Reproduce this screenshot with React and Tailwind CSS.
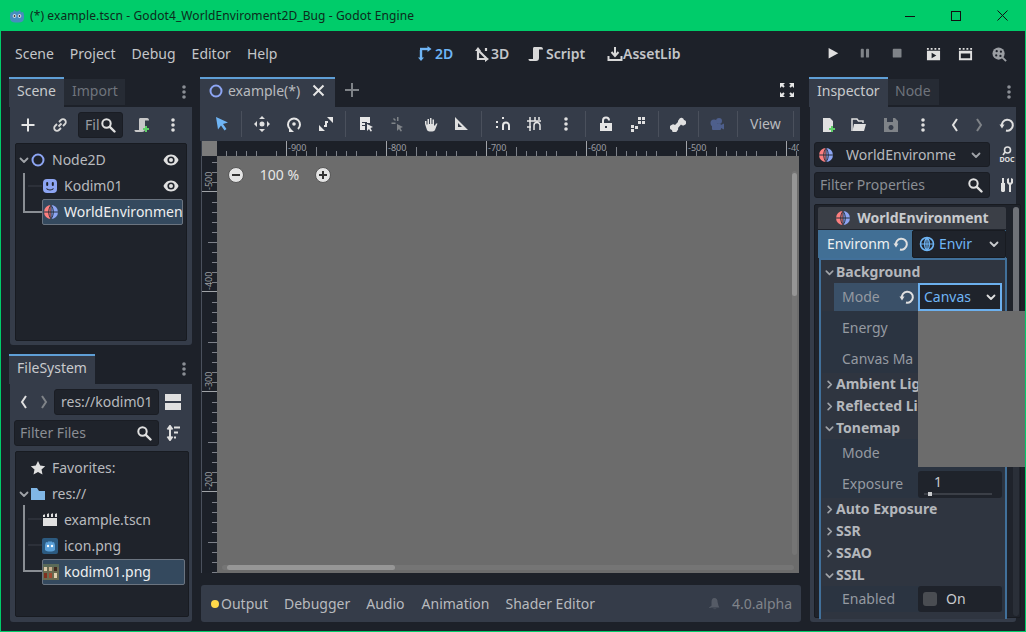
import React from "react";

const Ic = ({ s = 16, w, h, c = "#e0e0e0", vb = "0 0 16 16", children, className = "" }) => (
  <svg width={w || s} height={h || s} viewBox={vb} fill={c} className={"shrink-0 " + className}>{children}</svg>
);
const Dots = ({ c = "#e0e0e0" }) => (
  <Ic c={c}><circle cx="8" cy="3" r="1.8" /><circle cx="8" cy="8" r="1.8" /><circle cx="8" cy="13" r="1.8" /></Ic>
);
const Search = ({ c = "#e0e0e0" }) => (
  <Ic c="none"><circle cx="6.5" cy="6.5" r="4.2" stroke={c} strokeWidth="2" /><path d="M9.8 9.8L14.5 14.5" stroke={c} strokeWidth="2.4" strokeLinecap="round" /></Ic>
);
const Chev = ({ c = "#a0a3a8", s = 12 }) => (
  <Ic s={s} c="none" vb="0 0 12 12"><path d="M2.5 4.5L6 8l3.5-3.5" stroke={c} strokeWidth="1.8" strokeLinecap="round" strokeLinejoin="round" /></Ic>
);
const ChevR = ({ c = "#a0a3a8", s = 12 }) => (
  <Ic s={s} c="none" vb="0 0 12 12"><path d="M4.5 2.5L8 6l-3.5 3.5" stroke={c} strokeWidth="1.8" strokeLinecap="round" strokeLinejoin="round" /></Ic>
);
const Eye = () => (
  <Ic><path d="M8 2.5C4 2.5 1.5 5.5.5 8c1 2.5 3.5 5.5 7.5 5.5s6.500-3 7.500-5.500C14.500 5.500 12 2.500 8 2.500z" /><circle cx="8" cy="8" r="3.600" fill="#1f232b" /><circle cx="8" cy="8" r="2" /></Ic>
);
const Ring = () => (
  <Ic c="none"><circle cx="8" cy="8" r="5.500" stroke="#8da5f3" strokeWidth="2" /></Ic>
);
const Kodim = () => (
  <Ic><rect x="1" y="1" width="14" height="14" rx="4" fill="#8da5f3" /><rect x="4.200" y="4" width="2" height="4" rx="1" fill="#1f232b" /><rect x="9.800" y="4" width="2" height="4" rx="1" fill="#1f232b" /><path d="M4.500 10.500c1.500 2 5.500 2 7 0" stroke="#1f232b" strokeWidth="1.200" fill="none" /></Ic>
);
const WorldIc = () => (
  <Ic c="none">
    <path d="M8 1a7 7 0 0 0 0 14z" fill="#fc7f7f" />
    <path d="M8 1a7 7 0 0 1 0 14z" fill="#8da5f3" />
    <path d="M1 8h14M8 1v14M8 1.500C5 4 5 12 8 14.500M8 1.500c3 2.500 3 10.500 0 13" stroke="#26303c" strokeWidth="1" />
  </Ic>
);
const Globe = () => (
  <Ic c="none"><circle cx="8" cy="8" r="6.500" stroke="#6fb5f5" strokeWidth="1.600" /><path d="M1.500 8h13M8 1.500v13M8 1.500C4.800 4 4.800 12 8 14.500M8 1.500c3.200 2.500 3.200 10.500 0 13" stroke="#6fb5f5" strokeWidth="1.200" /></Ic>
);
const Revert = ({ c = "#e0e0e0" }) => (
  <Ic c="none"><path d="M3 9.500A5.500 5.500 0 1 1 7 13.500" stroke={c} strokeWidth="2" /><path d="M.5 7.500h5l-2.500 4z" fill={c} /></Ic>
);
const ScriptIc = ({ plus }) => (
  <Ic>
    <path d="M6 1h7c1.500 0 2 1 2 2.500H11V12a3 3 0 0 1-3 3H2c-1 0-1.500-1-1.500-2H5V3c0-1 .3-2 1-2z" fill={plus ? "#c8c8c8" : "#d8d8d8"} />
    {plus && <path d="M11 9h2v2h2v2h-2v2h-2v-2H9v-2h2z" fill="#5fd068" />}
  </Ic>
);
const TabBar = ({ children }) => <div className="h-[30px] flex items-end">{children}</div>;
const ActiveTab = ({ className, children }) => (
  <div className={"h-[30px] bg-[#353c49] border-t-2 border-[#5f9fd6] flex items-center pb-[4px] text-[#c8cacd] " + className}>{children}</div>
);
const Input = ({ className, children }) => (
  <div className={"bg-[#1f232b] rounded-[3px] border border-[#1a1d24] flex items-center " + className}>{children}</div>
);
const Sep = () => <div className="w-px h-[26px] bg-[#4a505c]" />;

const Row = ({ children, selected }) => (
  <div className={"h-[26px] flex items-center " + (selected ? "bg-[#34495e] border border-[#6b7480] rounded-[2px] ml-[26px] mr-[3px]" : "")}>{children}</div>
);

const Lines = ({ children }) => <svg className="absolute left-0 top-0" width="60" height="170" fill="none">{children}</svg>;

function HRuler() {
  const ticks = [];
  for (let i = 0; i < 60; i++) {
    const x = 9 + i * 10;
    const mod = (i + 6) % 10;
    if (mod === 0) continue;
    const y = mod === 5 ? 6 : 10;
    ticks.push(<path key={i} d={`M${x + 0.5} ${y}V15`} stroke="#7c8088" />);
  }
  const labels = ["-900", "-800", "-700", "-600", "-500", "-40"];
  return (
    <svg width="583" height="15" className="block">
      {ticks}
      {labels.map((l, i) => (
        <g key={l}>
          <path d={`M${69.5 + i * 100} 0V15`} stroke="#a0a3a8" />
          <text x={71 + i * 100} y="9.500" fontSize="9" fill="#9a9da2" fontFamily="Noto Sans">{l}</text>
        </g>
      ))}
    </svg>
  );
}
function VRuler() {
  const ticks = [];
  for (let i = 0; i < 42; i++) {
    const y = 6 + i * 10;
    const mod = (i + 7) % 10;
    if (mod === 0) continue;
    const x = mod === 5 ? 6 : 10;
    ticks.push(<path key={i} d={`M${x} ${y + 0.5}H15`} stroke="#7c8088" />);
  }
  return (
    <svg width="15" height="417" className="block">
      {ticks}
      {[-500, -400, -300, -200].map((l, i) => (
        <g key={l}>
          <path d={`M0 ${35.5 + i * 100}H15`} stroke="#a0a3a8" />
          <text transform={`translate(9.500 ${34 + i * 100}) rotate(-90)`} fontSize="9" fill="#9a9da2" fontFamily="Noto Sans">{l}</text>
        </g>
      ))}
    </svg>
  );
}

const Section = ({ open, children }) => (
  <div className="h-[22px] flex items-center font-bold text-[#b4b7bc] pl-[2px] bg-[#2f3540]">
    {open ? <Chev s={11} /> : <ChevR s={11} />}
    <span className="ml-[1px] whitespace-nowrap">{children}</span>
  </div>
);
const Prop = ({ className, children, right }) => (
  <div className={"flex items-center bg-[#2b3441] " + className}>
    <span className="pl-[20px] w-[96px] text-[#959aa1] whitespace-nowrap overflow-hidden">{children}</span>
    {right}
  </div>
);

export default function App() {
  return (
    <div className="relative w-[1026px] h-[632px] overflow-hidden bg-[#1d2129] border-x border-b border-[#00cc6a] text-[14px] leading-[20px] text-[#c8cacd] font-['Noto_Sans',sans-serif]">
      {/* Title bar */}
      <div className="h-[31px] bg-[#00cc6a] flex items-center text-[#0d2a1c] text-[12px] tracking-[0.1px] pl-[8px]">
        <Ic s={16} c="#478cbf">
          <path d="M1 8c0-2 .5-3 1-4l2 .5L5 2l2 1.500h2L11 2l1 2.500L14 4c.5 1 1 2 1 4 0 1 0 4-1 5-2 2-10 2-12 0-1-1-1-4-1-5z" />
          <circle cx="5.500" cy="8" r="1.800" fill="#fff" /><circle cx="10.500" cy="8" r="1.800" fill="#fff" />
          <circle cx="5.500" cy="8" r="1" fill="#333" /><circle cx="10.500" cy="8" r="1" fill="#333" />
        </Ic>
        <span className="ml-[5px] whitespace-nowrap">(*) example.tscn - Godot4_WorldEnviroment2D_Bug - Godot Engine</span>
        <div className="ml-auto flex items-center">
          <div className="w-[46px] flex justify-center"><svg width="10" height="10" fill="none"><path d="M0 5.500H10" stroke="#111" /></svg></div>
          <div className="w-[46px] flex justify-center"><svg width="10" height="10" fill="none"><rect x=".5" y=".5" width="9" height="9" stroke="#111" /></svg></div>
          <div className="w-[46px] flex justify-center"><svg width="11" height="11" fill="none"><path d="M.5.5l10 10M10.500.5l-10 10" stroke="#111" /></svg></div>
        </div>
      </div>

      {/* Menu bar */}
      <div className="h-[46px] flex items-center relative">
        <div className="w-[416px] pl-[14px] flex gap-[16px] text-[#c4c6c9]">
          <span>Scene</span><span>Project</span><span>Debug</span><span>Editor</span><span>Help</span>
        </div>
        <div className="flex items-center font-semibold text-[#c4c6c9]">
          <Ic c="none"><path d="M4 4v8" stroke="#6fb5f5" strokeWidth="2.400" /><path d="M1 11.500h6L4 15z" fill="#6fb5f5" /><path d="M3 3h8" stroke="#6fb5f5" strokeWidth="2.400" /><path d="M10.500 0v6L14.500 3z" fill="#6fb5f5" /></Ic>
          <span className="text-[#6fb5f5] w-[41px] pl-[2px]">2D</span>
          <Ic c="none" className="mr-[1px]"><path d="M4 4v9h8M4 4l8 8M12 2v3" stroke="#d8d8d8" strokeWidth="2.200" /><path d="M1 5l3-4 3 4zM11 10l4 3-4 3z" fill="#d8d8d8" /></Ic>
          <span className="w-[37px]">3D</span>
          <ScriptIc />
          <span className="ml-[2px] w-[61px]">Script</span>
          <Ic c="none"><path d="M8 1v8M4.500 6L8 10l3.500-4M1.500 10v4h13v-4" stroke="#d8d8d8" strokeWidth="2" /></Ic>
          <span>AssetLib</span>
        </div>
        <div className="ml-auto flex items-center mr-[18px]">
          <Ic s={14} className="mr-[19px]"><path d="M3 1l11 6-11 6z" /></Ic>
          <Ic s={14} c="#7f8388" className="mr-[18px]"><rect x="2" y="2" width="3.500" height="10" rx="1" /><rect x="8" y="2" width="3.500" height="10" rx="1" /></Ic>
          <Ic s={14} c="#7f8388" className="mr-[21px]"><rect x="2" y="2" width="10" height="10" rx="1" /></Ic>
          <Ic s={15} className="mr-[17px]"><path d="M1 1h2v2H1zM5 1h2v2H5zM9 1h2v2H9zM13 1h2v2h-2zM1 4h14v10H1z" /><path d="M6 6l5 3-5 3z" fill="#1d2129" /></Ic>
          <Ic s={15} className="mr-[19px]"><path d="M1 1h2v2H1zM5 1h2v2H5zM9 1h2v2H9zM13 1h2v2h-2z" /><path d="M1 4h14v10H1zM3 7v5h10V7z" fillRule="evenodd" /></Ic>
          <Ic s={15} c="#9a9da2"><circle cx="7" cy="7" r="6.500" /><circle cx="5" cy="4.500" r="1.200" fill="#1d2129" /><circle cx="9.500" cy="5" r="1.200" fill="#1d2129" /><circle cx="4.500" cy="9" r="1.200" fill="#1d2129" /><circle cx="9" cy="9.500" r="1.200" fill="#1d2129" /><path d="M11 11l4 4" stroke="#9a9da2" strokeWidth="2" /></Ic>
        </div>
      </div>

      {/* Docks */}
      <div className="flex pl-[8px] h-[545px]">
        {/* Left column */}
        <div className="w-[183px] flex flex-col">
          <TabBar>
            <ActiveTab className="w-[55px] pl-[8px]">Scene</ActiveTab>
            <div className="h-[26px] mb-[2px] w-[61px] bg-[#262b34] flex items-center pl-[8px] pb-[2px] text-[#6f747c]">Import</div>
            <div className="ml-auto mr-[0px] mb-[7px]"><Dots c="#8a8e94" /></div>
          </TabBar>
          <div className="ml-[1px] h-[238px] bg-[#353c49] rounded-b-[3px] pt-[5px] px-[5px] pb-[4px] flex flex-col">
            <div className="h-[26px] flex items-center">
              <Ic c="none" className="ml-[5px]"><path d="M8 1.500v13M1.500 8h13" stroke="#e6e6e6" strokeWidth="2" /></Ic>
              <Ic c="none" className="ml-[16px]"><path d="M6.500 9.500l3-3M5 7L3 9a2.800 2.800 0 0 0 4 4l2-2M7 5l2-2a2.800 2.800 0 0 1 4 4l-2 2" stroke="#d8d8d8" strokeWidth="1.800" /></Ic>
              <Input className="ml-[10px] w-[45px] h-[26px] pl-[6px] text-[#9a9da2]"><span>Fil</span><Search /></Input>
              <span className="ml-[11px]"><ScriptIc plus /></span>
              <span className="ml-[15px]"><Dots /></span>
            </div>
            <div className="relative mt-[5px] flex-1 bg-[#1f232b] border border-[#181b21] rounded-[2px] pt-[3px]">
              <Lines>
                <path d="M12 42H26" stroke="#3a3f49" />
                <path d="M8 29V68H26" stroke="#8a8e94" strokeWidth="2" />
              </Lines>
              <Row>
                <span className="ml-[2px] w-[10px]"><Chev /></span>
                <span className="ml-[2px]"><Ring /></span>
                <span className="ml-[6px] text-[#b8babe]">Node2D</span>
                <span className="ml-auto mr-[7px]"><Eye /></span>
              </Row>
              <Row>
                <span className="ml-[26px]"><Kodim /></span>
                <span className="ml-[6px] text-[#b8babe]">Kodim01</span>
                <span className="ml-auto mr-[7px]"><Eye /></span>
              </Row>
              <Row selected>
                <WorldIc />
                <span className="ml-[5px] text-[#eeeff0] whitespace-nowrap">WorldEnvironmen</span>
              </Row>
            </div>
          </div>

          <div className="mt-[9px]">
            <TabBar>
              <ActiveTab className="w-[86px] pl-[8px]">FileSystem</ActiveTab>
              <div className="ml-auto mb-[7px]"><Dots c="#8a8e94" /></div>
            </TabBar>
          </div>
          <div className="ml-[1px] h-[238px] bg-[#353c49] rounded-b-[3px] pt-[5px] px-[4px] pb-[5px] flex flex-col">
            <div className="h-[26px] flex items-center">
              <Ic c="none" className="ml-[2px]"><path d="M10 2L6 8l4 6" stroke="#e0e0e0" strokeWidth="2" /></Ic>
              <Ic c="none" className="ml-[4px]"><path d="M6 2l4 6-4 6" stroke="#7f8388" strokeWidth="2" /></Ic>
              <Input className="ml-[2px] w-[105px] h-[26px] pl-[6px] text-[#b8babe] whitespace-nowrap overflow-hidden">res://kodim01</Input>
              <svg width="16" height="16" className="ml-[6px]" fill="#e0e0e0"><rect width="16" height="7" /><rect y="9" width="16" height="7" /></svg>
            </div>
            <div className="h-[26px] mt-[5px] flex items-center">
              <Input className="w-[145px] h-[26px] pl-[5px] pr-[6px] text-[#8a8e94] justify-between">Filter Files<Search /></Input>
              <span className="ml-[6px]"><Ic c="none"><path d="M5 2v12M2.500 4.500L5 1l2.500 3.500M2.500 11.500L5 15l2.500-3.500" stroke="#e0e0e0" strokeWidth="2" /><path d="M9 2.500h6M9 7.500h4M9 12.500h2" stroke="#e0e0e0" strokeWidth="2" /></Ic></span>
            </div>
            <div className="relative mt-[5px] ml-[1px] mr-[-1px] flex-1 bg-[#1f232b] border border-[#181b21] rounded-[2px] pt-[3px]">
              <Lines>
                <path d="M8 53V119H26" stroke="#8a8e94" strokeWidth="2" />
                <path d="M12 67H26M12 93H26" stroke="#3a3f49" />
              </Lines>
              <Row>
                <span className="ml-[14px]"><Ic><path d="M8 1l2.200 4.600 5 .6-3.700 3.400 1 5L8 12.100 3.500 14.600l1-5L.8 6.200l5-.6z" /></Ic></span>
                <span className="ml-[6px] text-[#b8babe]">Favorites:</span>
              </Row>
              <Row>
                <span className="ml-[2px] w-[10px]"><Chev /></span>
                <span className="ml-[2px]"><Ic c="#80b6e6"><path d="M1 2h6l2 3h6v9H1z" /></Ic></span>
                <span className="ml-[6px] text-[#b8babe]">res://</span>
              </Row>
              <Row>
                <span className="ml-[26px]"><Ic><path d="M1 6h14v8H1zM1 3l2-.8v2.800H1zM5 2l2-.8v3.800H5zM9 2l2-.800v3.800H9zM13 2l2-.800v3.800h-2z" /></Ic></span>
                <span className="ml-[6px] text-[#b8babe]">example.tscn</span>
              </Row>
              <Row>
                <span className="ml-[26px]">
                  <Ic><rect width="16" height="16" rx="2" fill="#2c5a80" /><path d="M3 7l1-3 1.500.5L6 3.500h4l.5 1L12 4l1 3v5c-2 2-8 2-10 0z" fill="#5aa0d8" /><circle cx="6" cy="8" r="1.200" fill="#fff" /><circle cx="10" cy="8" r="1.200" fill="#fff" /></Ic>
                </span>
                <span className="ml-[6px] text-[#b8babe]">icon.png</span>
              </Row>
              <Row selected>
                <Ic><rect width="16" height="16" fill="#6a6a50" /><rect y="0" width="16" height="3" fill="#5a6a58" /><rect x="1" y="3" width="3" height="4" fill="#d8c8a8" /><rect x="6" y="3" width="3" height="4" fill="#c8b090" /><rect x="11" y="3" width="3" height="4" fill="#402820" /><rect x="1" y="9" width="3" height="5" fill="#803020" /><rect x="6" y="9" width="3" height="5" fill="#a04830" /><rect x="11" y="9" width="3" height="5" fill="#e0d0b0" /></Ic>
                <span className="ml-[5px] text-[#eeeff0]">kodim01.png</span>
              </Row>
            </div>
          </div>
        </div>

        {/* Center */}
        <div className="ml-[8px] w-[600px] flex flex-col">
          <div className="h-[30px] flex">
            <ActiveTab className="w-[135px] pl-[8px]">
              <Ring /><span className="ml-[4px] text-[#b8babe]">example(*)</span>
              <Ic c="none" className="ml-[11px]"><path d="M2.500 2.500l10 10M12.500 2.500l-10 10" stroke="#e6e6e6" strokeWidth="2" /></Ic>
            </ActiveTab>
            <Ic c="none" className="ml-[9px] mt-[5px]"><path d="M8 1v14M1 8h14" stroke="#7f8388" strokeWidth="2" /></Ic>
            <Ic className="ml-auto mt-[5px] mr-[5px]" c="none"><path d="M1 1h5L1 6zM15 1v5l-5-5zM15 15h-5l5-5zM1 15v-5l5 5z" fill="#e6e6e6" /><path d="M2 2l3 3M14 2l-3 3M14 14l-3-3M2 14l3-3" stroke="#e6e6e6" strokeWidth="2" /></Ic>
          </div>
          <div className="h-[34px] bg-[#353c49] flex items-center relative">
            <Ic c="#6fb5f5" className="ml-[14px]"><path d="M2 1l12 5.500-5 1.500 3.500 5-2 1.500-3.500-5-3 4z" /></Ic>
            <span className="ml-[11px]"><Sep /></span>
            <Ic className="ml-[12px]"><path d="M8 0l3 3H5zM8 16l-3-3h6zM0 8l3-3v6zM16 8l-3 3V5z" /><circle cx="8" cy="8" r="2.500" /></Ic>
            <Ic c="none" className="ml-[16px]"><path d="M4 13a6 6 0 1 1 8 0" stroke="#e6e6e6" strokeWidth="2" /><circle cx="8" cy="8" r="1.800" fill="#e6e6e6" /><path d="M8 16H3v-5z" fill="#e6e6e6" /></Ic>
            <Ic c="none" className="ml-[16px]"><path d="M9 1h6v6zM7 15H1V9z" fill="#e6e6e6" /><path d="M10 6h-2v2M6 10h2V8" stroke="#e6e6e6" strokeWidth="2" /></Ic>
            <span className="ml-[11px]"><Sep /></span>
            <Ic c="none" className="ml-[12px]"><path d="M2 1h10v6H9v-1H4v1h3v2H4v1h3v4H2z" fill="#e6e6e6" /><path d="M9 8l6 3-2.500 1 1.500 3-1.500.5L11 13l-2 2z" fill="#e6e6e6" /></Ic>
            <Ic className="ml-[16px]" c="#7f8388"><path d="M7 8l6 3-2.500 1 1.500 3-1.500.5L9 13l-2 2zM7 1h1.500v4H7zM1.500 6.500h4V8h-4zM3 3l1-1 2 2-1 1z" /></Ic>
            <Ic className="ml-[16px]"><path d="M3 8V5h1.500v3.500H5.500V3H7v5h1V2h1.500v6h1V3.500H12v6h1l1-2h1.500L13 14c-1 2-7 2-8 0z" /></Ic>
            <Ic className="ml-[15px]"><path d="M2 1l13 13H2zM5 7v4h4z" fillRule="evenodd" /></Ic>
            <span className="ml-[12px]"><Sep /></span>
            <Ic c="none" className="ml-[13px]"><path d="M8 14V9.500a3 3 0 0 1 6 0V14" stroke="#e6e6e6" strokeWidth="2" /><path d="M1 5h2v2H1zM7 1h2v2H7zM1 10h2v2H1z" fill="#e6e6e6" /></Ic>
            <Ic c="none" className="ml-[15px]"><path d="M8 14V9.500a3 3 0 0 1 6 0V14M1 5h14M1 11h4M4 1v14M9 1v4M13 1v3" stroke="#e6e6e6" strokeWidth="1.500" /></Ic>
            <span className="ml-[16px]"><Dots /></span>
            <span className="ml-[11px]"><Sep /></span>
            <Ic className="ml-[12px]" c="none"><rect x="2" y="7" width="12" height="8" fill="#e6e6e6" /><path d="M5 7V4.500a3 3 0 0 1 6 0" stroke="#e6e6e6" strokeWidth="2" /><rect x="7" y="10" width="2" height="2" fill="#353c49" /></Ic>
            <Ic className="ml-[16px]"><path d="M1 9h3v3H1zM1 13h3v3H1zM5 13h3v-3H5zM8 5h3v3H8zM12 5h3v3h-3zM12 1h3v3h-3zM8 1h3v3H8z" /></Ic>
            <span className="ml-[12px]"><Sep /></span>
            <Ic className="ml-[11px]" c="#e0e0e0"><path d="M9 3.500a2.600 2.600 0 0 1 5 .5 2.600 2.600 0 0 1 .5 5 2.600 2.600 0 0 1-3.500-.5L8 12a2.600 2.600 0 0 1-1 3 2.600 2.600 0 0 1-5-1 2.600 2.600 0 0 1-.5-5A2.600 2.600 0 0 1 5 9l3-3a2.600 2.600 0 0 1 1-2.500z" /></Ic>
            <span className="ml-[12px]"><Sep /></span>
            <Ic className="ml-[10px]" c="#4e5f8c"><circle cx="5" cy="7" r="3.500" /><circle cx="10" cy="5" r="3" /><rect x="3" y="8" width="9" height="6" rx="1" /><path d="M12 9l3-1.500v6L12 12z" /></Ic>
            <span className="ml-[12px]"><Sep /></span>
            <span className="ml-[12px] text-[#b8babe]">View</span>
            <span className="ml-[12px]"><Sep /></span>
          </div>

          {/* Viewport */}
          <div className="relative h-[432px] ml-[1px] mr-[1px] flex flex-col">
            <div className="flex h-[15px] bg-[#1c2028]">
              <div className="w-[16px] bg-[#7b7b7b] border-l border-[#353c49]" />
              <HRuler />
            </div>
            <div className="flex flex-1 min-h-0">
              <div className="w-[16px] bg-[#1c2028] border-l border-[#4a505c] overflow-hidden"><VRuler /></div>
              <div className="flex-1 bg-[#6c6c6c] relative">
                <div className="absolute left-[11px] top-[9px] flex items-center text-[#e6e6e6]">
                  <svg width="16" height="16" fill="none"><circle cx="8" cy="8" r="7.500" fill="#e4e4e4" stroke="#555" /><path d="M4 8h8" stroke="#333" strokeWidth="2" /></svg>
                  <span className="w-[71px] text-center">100 %</span>
                  <svg width="16" height="16" fill="none"><circle cx="8" cy="8" r="7.500" fill="#e4e4e4" stroke="#555" /><path d="M4 8h8M8 4v8" stroke="#333" strokeWidth="2" /></svg>
                </div>
                <div className="absolute right-[2px] top-[15px] bottom-[18px] w-[5px] rounded-full bg-[#757575]">
                  <div className="h-[123px] w-[5px] rounded-full bg-[#969696] mt-[2px]" />
                </div>
                <div className="absolute left-[5px] right-[5px] bottom-[3px] h-[5px] rounded-full bg-[#757575]">
                  <div className="ml-[5px] h-[5px] w-[168px] rounded-full bg-[#969696]" />
                </div>
              </div>
            </div>
          </div>

          {/* Bottom panel */}
          <div className="mt-[12px] h-[37px] ml-[1px] mr-[-1px] bg-[#353c49] rounded-[3px] flex items-center pl-[10px] relative text-[#b8babe]">
            <span className="w-[8px] h-[8px] rounded-full bg-[#ffd94a]" />
            <span className="ml-[2px]">Output</span>
            <span className="ml-[16px]">Debugger</span>
            <span className="ml-[16px]">Audio</span>
            <span className="ml-[17px]">Animation</span>
            <span className="ml-[16px]">Shader Editor</span>
            <Ic s={14} c="#555b66" className="ml-auto"><path d="M7 1c3 0 4 2 4 5l1 4 1 2H4c-1 0-2 1-3 0l3-2 0-4c0-3 1-5 3-5zM5 13h5l-2 1z" /></Ic>
            <span className="ml-[10px] mr-[9px] text-[#80848b]">4.0.alpha</span>
          </div>
        </div>

        {/* Inspector */}
        <div className="ml-[9px] w-[207px] flex flex-col relative">
          <TabBar>
            <ActiveTab className="w-[79px] pl-[8px]">Inspector</ActiveTab>
            <div className="h-[26px] mb-[2px] w-[51px] bg-[#262b34] flex items-center pl-[7px] pb-[2px] text-[#6f747c]">Node</div>
            <div className="ml-auto mr-[-1px] mb-[7px]"><Dots c="#8a8e94" /></div>
          </TabBar>
          <div className="ml-[1px] h-[515px] bg-[#353c49] pt-[5px] pl-[4px] rounded-b-[3px]">
            <div className="h-[26px] flex items-center">
              <Ic className="ml-[6px]"><path d="M3 1h7l3 3v5h-2v2H9v2h2v2H3z" /><path d="M11 9h2v2h2v2h-2v2h-2v-2H9v-2h2z" fill="#5fd068" /></Ic>
              <Ic className="ml-[15px]" c="none"><path d="M1 14V2h5l1.500 2H12v2" stroke="#e0e0e0" strokeWidth="1.500" /><path d="M3 7h12l-2 7H1.500z" fill="#e0e0e0" /></Ic>
              <Ic className="ml-[16px]" c="#7f8388"><path d="M1 1h11l3 3v11H1zM4 1h6v4H4zM8 8a2.500 2.500 0 1 0 .01 0z" fillRule="evenodd" /></Ic>
              <span className="ml-[16px]"><Dots /></span>
              <Ic className="ml-[16px]" c="none"><path d="M10 2L6 8l4 6" stroke="#e0e0e0" strokeWidth="2" /></Ic>
              <Ic className="ml-[8px]" c="none"><path d="M6 2l4 6-4 6" stroke="#7f8388" strokeWidth="2" /></Ic>
              <span className="ml-[12px]"><Revert /></span>
            </div>
            <div className="h-[25px] mt-[4px] flex items-center">
              <Input className="w-[176px] h-[25px] pl-[3px] text-[#b8babe]">
                <WorldIc /><span className="ml-[12px]">WorldEnvironme</span><span className="ml-auto mr-[7px]"><Chev /></span>
              </Input>
              <div className="ml-[9px] w-[16px] flex flex-col items-center leading-none">
                <Ic s={10} c="none" vb="0 0 10 10"><circle cx="5.500" cy="4" r="3" stroke="#e0e0e0" strokeWidth="1.600" /><path d="M3 6L1 9" stroke="#e0e0e0" strokeWidth="1.600" /></Ic>
                <span className="text-[7px] font-bold text-[#e0e0e0] leading-[7px]">DOC</span>
              </div>
            </div>
            <div className="h-[26px] mt-[5px] flex items-center">
              <Input className="w-[176px] h-[26px] pl-[5px] pr-[6px] justify-between text-[#8a8e94]">Filter Properties<Search /></Input>
              <Ic className="ml-[9px]"><path d="M3 1h2v5h1v8l-1 1H3l-1-1V6h1zM10 1v4l1 1 1-1V1l2 1v4l-2 2v7h-2V8L8 6V2z" /></Ic>
            </div>
            <div className="mt-[6px] w-[207px] h-[414px] bg-[#1f232b] border border-[#181b21] rounded-[2px] relative pl-[3px] pt-[2px]">
              <div className="absolute left-[198px] top-[2px] bottom-[1px] w-[6px] rounded-full bg-[#2a2f38]">
                <div className="w-[6px] h-[140px] rounded-full bg-[#6f7278]" />
              </div>
              <div className="w-[188px] h-[22px] bg-[#3b3f47] rounded-t-[2px] flex items-center justify-center font-bold text-[#c8cacd]">
                <WorldIc /><span className="ml-[6px]">WorldEnvironment</span>
              </div>
              <div className="w-[188px] h-[28px] flex bg-[#416f95] mt-[1px]">
                <div className="w-[94px] flex items-center pl-[9px] pb-[1px] text-[#eeeff0]">
                  <span>Environm</span><span className="ml-auto mr-[3px]"><Revert /></span>
                </div>
                <div className="flex-1 bg-[#1f232b] border border-[#181b21] rounded-[2px] flex items-center pb-[1px] pl-[6px] text-[#6fb5f5]">
                  <Globe /><span className="ml-[4px]">Envir</span><span className="ml-auto mr-[5px]"><Chev c="#c8cacd" /></span>
                </div>
              </div>
              <div className="w-[188px] h-[361px] ml-[1px] border-x-2 border-t-2 border-b-0 border-[#41709a] bg-[#2f3540] pl-[1px] pr-[1px] pt-[1px]">
                <Section open>Background</Section>
                <div className="h-[28px] flex bg-[#2f3540]">
                  <div className="ml-[12px] w-[84px] bg-[#3a5068] flex items-center pl-[8px] text-[#959aa1]">
                    Mode<span className="ml-auto mr-[3px]"><Revert /></span>
                  </div>
                  <div className="w-[84px] border-2 border-[#6cb0ee] bg-[#1f232b] flex items-center pl-[4px] text-[#6fb5f5]">
                    Canvas<span className="ml-auto mr-[3px]"><Chev c="#e0e0e0" /></span>
                  </div>
                </div>
                <Prop className="h-[33px]">Energy</Prop>
                <Prop className="h-[29px]">Canvas Ma</Prop>
                <Section>Ambient Light</Section>
                <Section>Reflected Light</Section>
                <Section open>Tonemap</Section>
                <Prop className="h-[29px] pb-[2px]">Mode</Prop>
                <Prop className="h-[30px] pt-[2px]" right={
                  <div className="w-[84px] h-[27px] bg-[#1f232b] rounded-[3px] relative pl-[16px] pt-[1px] text-[#c8cacd]">
                    1
                    <div className="absolute left-[6px] right-[10px] bottom-[3px] h-[2px] bg-[#3b3f47]" />
                    <div className="absolute left-[10px] bottom-[2px] w-[4px] h-[4px] bg-[#c8cacd]" />
                  </div>
                }>Exposure</Prop>
                <Section>Auto Exposure</Section>
                <Section>SSR</Section>
                <Section>SSAO</Section>
                <Section open>SSIL</Section>
                <Prop className="h-[26px]" right={
                  <div className="w-[84px] h-[26px] bg-[#1f232b] rounded-[3px] flex items-center pl-[5px]">
                    <span className="w-[14px] h-[14px] rounded-[3px] bg-[#4a4d52]" />
                    <span className="ml-[9px] text-[#c8cacd]">On</span>
                  </div>
                }>Enabled</Prop>
              </div>
            </div>
          </div>
        </div>
      </div>

      {/* Unpainted popup region over the inspector */}
      <div className="absolute left-[917px] top-[311px] w-[109px] h-[156px] bg-[#6c6c6c]" />
    </div>
  );
}
